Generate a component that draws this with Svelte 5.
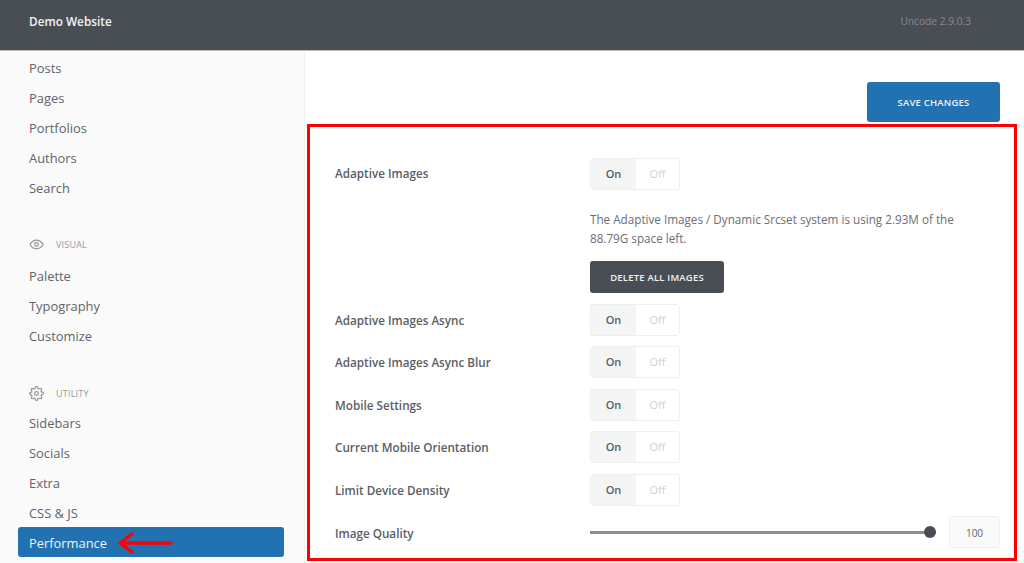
<script>
    const groups = [
        { items: ["Posts", "Pages", "Portfolios", "Authors", "Search"] },
        { title: "Visual", icon: "eye", items: ["Palette", "Typography", "Customize"] },
        { title: "Utility", icon: "gear", items: ["Sidebars", "Socials", "Extra", "CSS & JS", "Performance"] }
    ]
    const toggles = [
        "Adaptive Images Async",
        "Adaptive Images Async Blur",
        "Mobile Settings",
        "Current Mobile Orientation",
        "Limit Device Density"
    ]
</script>

<div class="page">
    <header class="topbar">
        <span class="site">Demo Website</span>
        <span class="version">Uncode 2.9.0.3</span>
    </header>

    <div class="body">
        <nav class="sidebar">
            {#each groups as group}
                <div class="group">
                    {#if group.title}
                        <div class="group-title">
                            {#if group.icon === "eye"}
                                <svg viewBox="0 0 24 24" width="15" height="15" fill="none" stroke="#8f9296" stroke-width="1.8" stroke-linecap="round" stroke-linejoin="round">
                                    <path d="M1.5 12S5.5 5 12 5s10.5 7 10.5 7-4 7-10.5 7S1.5 12 1.5 12z" />
                                    <circle cx="12" cy="12" r="3" />
                                </svg>
                            {:else}
                                <svg viewBox="0 0 24 24" width="15" height="15" fill="none" stroke="#8f9296" stroke-width="1.8" stroke-linecap="round" stroke-linejoin="round">
                                    <circle cx="12" cy="12" r="3" />
                                    <path d="M19.4 15a1.65 1.65 0 0 0 .33 1.82l.06.06a2 2 0 1 1-2.83 2.83l-.06-.06a1.65 1.65 0 0 0-2.82 1.17V21a2 2 0 1 1-4 0v-.09a1.65 1.65 0 0 0-2.82-1.12l-.06.06a2 2 0 1 1-2.83-2.83l.06-.06a1.65 1.65 0 0 0-1.17-2.82H3a2 2 0 1 1 0-4h.09a1.65 1.65 0 0 0 1.12-2.82l-.06-.06a2 2 0 1 1 2.83-2.83l.06.06a1.65 1.65 0 0 0 1.82.33H9a1.65 1.65 0 0 0 1-1.51V3a2 2 0 1 1 4 0v.09a1.65 1.65 0 0 0 2.82 1.12l.06-.06a2 2 0 1 1 2.83 2.83l-.06.06a1.65 1.65 0 0 0 1.17 2.82H21a2 2 0 1 1 0 4h-.09a1.65 1.65 0 0 0-1.51 1z" />
                                </svg>
                            {/if}
                            <span>{group.title}</span>
                        </div>
                    {/if}
                    {#each group.items as item}
                        <a class="item" class:active={item === "Performance"} href="#top">{item}</a>
                    {/each}
                </div>
            {/each}
        </nav>

        <main class="main">
            <div class="actions">
                <button class="btn save">Save changes</button>
            </div>

            <section class="settings">
                <div class="row first">
                    <div class="label">Adaptive Images</div>
                    <div class="control">
                        <div class="toggle"><span class="on">On</span><span class="off">Off</span></div>
                        <p class="note">The Adaptive Images / Dynamic Srcset system is using 2.93M of the 88.79G space left.</p>
                        <button class="btn delete">Delete all images</button>
                    </div>
                </div>

                {#each toggles as name}
                    <div class="row">
                        <div class="label">{name}</div>
                        <div class="control">
                            <div class="toggle"><span class="on">On</span><span class="off">Off</span></div>
                        </div>
                    </div>
                {/each}

                <div class="row quality">
                    <div class="label">Image Quality</div>
                    <div class="control slider">
                        <div class="track"><div class="thumb"></div></div>
                        <div class="value">100</div>
                    </div>
                </div>
            </section>
        </main>
    </div>

    <!-- red annotations on top of the screenshot -->
    <div class="mark-box"></div>
    <svg class="mark-arrow" viewBox="0 0 56 24" width="56" height="24" fill="none" stroke="#ff0000" stroke-width="3.4" stroke-linecap="round" stroke-linejoin="round">
        <path d="M54 12H3M15 3 3 12l12 9" />
    </svg>
</div>

<style>
    :global(body) {
        background: #fff;
    }

    .page {
        position: relative;
        width: 1024px;
        height: 563px;
        overflow: hidden;
        font-family: "Open Sans", "Noto Sans", sans-serif;
        color: #60646b;
    }

    .topbar {
        display: flex;
        align-items: center;
        justify-content: space-between;
        box-sizing: border-box;
        height: 51px;
        padding: 0 53px 8px 29px;
        background: #494e55;
        border-bottom: 1px solid #b9bbbe;
    }

    .site {
        font-size: 11.8px;
        font-weight: 600;
        color: #f4f4f5;
    }

    .version {
        font-size: 10.2px;
        color: #858990;
    }

    .body {
        display: flex;
        height: 512px;
    }

    .sidebar {
        box-sizing: border-box;
        width: 305px;
        padding: 1px 20px 0 18px;
        background: #fafafa;
        border-right: 1px solid #f2f2f2;
    }

    .group {
        margin-bottom: 28px;
    }

    .group + .group {
        margin-bottom: 27px;
    }

    .group-title {
        display: flex;
        align-items: center;
        gap: 12px;
        box-sizing: border-box;
        height: 30px;
        padding: 0 0 1px 11px;
        font-size: 9px;
        text-transform: uppercase;
        letter-spacing: 0.2px;
        color: #96999d;
    }

    .group:last-child .group-title {
        padding: 2px 0 0 11px;
    }

    .item {
        display: block;
        height: 30px;
        padding-left: 11px;
        font-size: 12.9px;
        line-height: 32px;
        color: #60646b;
        text-decoration: none;
    }

    .item.active {
        border-radius: 3px;
        background: #2271b1;
        color: #eef4f9;
    }

    .main {
        flex: 1;
        padding: 31px 24px 0 30px;
    }

    .actions {
        display: flex;
        justify-content: flex-end;
    }

    .btn {
        box-sizing: border-box;
        border: 0;
        border-radius: 3px;
        font-family: inherit;
        font-size: 9.5px;
        font-weight: 600;
        letter-spacing: 0.2px;
        text-transform: uppercase;
        color: #f0f2f4;
    }

    .save {
        width: 133px;
        height: 40px;
        padding-top: 2px;
        background: #2271b1;
    }

    .settings {
        padding-top: 36px;
    }

    .row {
        display: flex;
        margin-bottom: 10.5px;
    }

    .label {
        flex: 0 0 255px;
        padding-top: 8px;
        font-size: 11.7px;
        font-weight: 600;
        line-height: 16px;
        color: #5a5e65;
    }

    .row.first .label {
        padding-top: 7px;
    }

    .row.quality .label {
        padding-top: 9px;
    }

    .control {
        flex: 1;
    }

    .toggle {
        display: flex;
        box-sizing: border-box;
        width: 90px;
        height: 32px;
        border: 1px solid #eeeff0;
        border-radius: 3px;
        font-size: 11px;
        line-height: 30px;
        text-align: center;
    }

    .on {
        width: 45px;
        background: #f4f5f5;
        font-weight: 600;
        color: #5a5e65;
    }

    .off {
        flex: 1;
        color: #cfd1d3;
    }

    .note {
        max-width: 372px;
        margin: 20px 0 13px;
        font-size: 11.7px;
        line-height: 19px;
        color: #6a6e75;
    }

    .delete {
        display: block;
        width: 134px;
        height: 32px;
        padding-top: 1px;
        background: #494e55;
    }

    .slider {
        display: flex;
        align-items: center;
        gap: 13px;
    }

    .track {
        position: relative;
        flex: 1;
        height: 3px;
        background: #8b8f94;
    }

    .thumb {
        position: absolute;
        top: -4.5px;
        right: 0;
        width: 12px;
        height: 12px;
        border-radius: 50%;
        background: #494e55;
    }

    .value {
        box-sizing: border-box;
        width: 51px;
        height: 32px;
        border: 1px solid #eeeff0;
        border-radius: 3px;
        background: #fafafa;
        font-size: 10px;
        line-height: 32px;
        text-align: center;
        color: #60646b;
    }

    .mark-box {
        position: absolute;
        top: 124px;
        left: 307px;
        box-sizing: border-box;
        width: 710px;
        height: 437px;
        border: 3px solid #ff0000;
    }

    .mark-arrow {
        position: absolute;
        top: 531px;
        left: 117px;
    }
</style>
